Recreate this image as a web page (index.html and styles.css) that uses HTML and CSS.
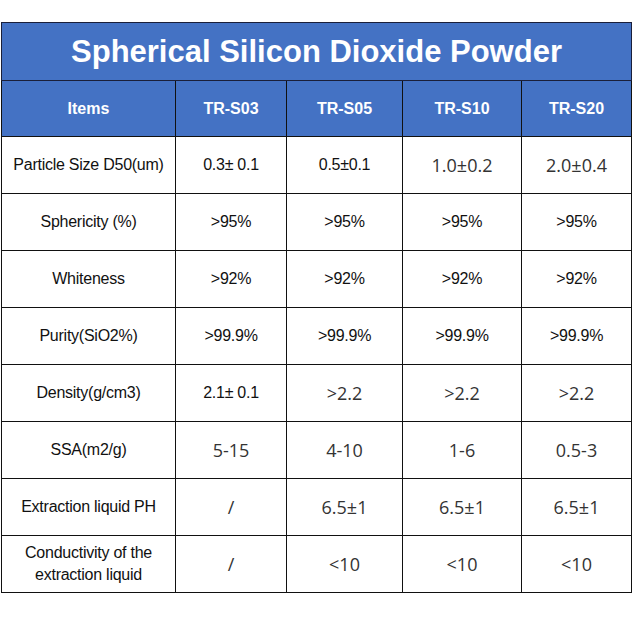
FILE: index.html
```html
<!DOCTYPE html>
<html>
<head>
<meta charset="utf-8">
<link rel="stylesheet" href="styles.css">
</head>
<body>
<div class="wrap">
<table class="spec">
  <colgroup>
    <col class="c0"><col class="c1"><col class="c2"><col class="c3"><col class="c4">
  </colgroup>
  <thead>
    <tr class="title-row"><th colspan="5" class="title">Spherical Silicon Dioxide Powder</th></tr>
    <tr class="head-row">
      <th>Items</th><th>TR-S03</th><th>TR-S05</th><th>TR-S10</th><th>TR-S20</th>
    </tr>
  </thead>
  <tbody>
    <tr><td>Particle Size D50(um)</td><td>0.3± 0.1</td><td>0.5±0.1</td><td class="alt">1.0±0.2</td><td class="alt">2.0±0.4</td></tr>
    <tr><td>Sphericity (%)</td><td>&gt;95%</td><td>&gt;95%</td><td>&gt;95%</td><td>&gt;95%</td></tr>
    <tr><td>Whiteness</td><td>&gt;92%</td><td>&gt;92%</td><td>&gt;92%</td><td>&gt;92%</td></tr>
    <tr><td>Purity(SiO2%)</td><td>&gt;99.9%</td><td>&gt;99.9%</td><td>&gt;99.9%</td><td>&gt;99.9%</td></tr>
    <tr><td>Density(g/cm3)</td><td>2.1± 0.1</td><td class="alt">&gt;2.2</td><td class="alt">&gt;2.2</td><td class="alt">&gt;2.2</td></tr>
    <tr><td>SSA(m2/g)</td><td class="alt">5-15</td><td class="alt">4-10</td><td class="alt">1-6</td><td class="alt">0.5-3</td></tr>
    <tr><td>Extraction liquid PH</td><td class="alt">/</td><td class="alt">6.5±1</td><td class="alt">6.5±1</td><td class="alt">6.5±1</td></tr>
    <tr><td class="two">Conductivity of the<br>extraction liquid</td><td class="alt">/</td><td class="alt">&lt;10</td><td class="alt">&lt;10</td><td class="alt">&lt;10</td></tr>
  </tbody>
</table>
</div>
</body>
</html>
```

FILE: styles.css
```css
html, body {
  margin: 0;
  padding: 0;
  background: #ffffff;
}
.wrap {
  padding: 22px 0 0 1px;
}
.spec {
  border-collapse: collapse;
  width: 630px;
  table-layout: fixed;
  font-family: "Liberation Sans", Arial, sans-serif;
  color: #111;
}
.c0 { width: 174px; }
.c1 { width: 111px; }
.c2 { width: 116px; }
.c3 { width: 119px; }
.c4 { width: 110px; }
.spec th, .spec td {
  border: 1px solid #111;
  text-align: center;
  vertical-align: middle;
  padding: 0;
  height: 56px;
}
.title-row th {
  height: 57px;
  background: #4472c4;
  color: #ffffff;
  font-size: 31px;
  font-weight: bold;
  border-color: #1a1f3a;
}
.head-row th {
  height: 55px;
  background: #4472c4;
  color: #ffffff;
  font-size: 16px;
  font-weight: bold;
  border-color: #111;
}
.spec td {
  font-size: 16px;
  letter-spacing: -0.25px;
}
.spec td.alt {
  font-family: "Open Sans", "Noto Sans CJK SC", sans-serif;
  font-size: 18px;
  color: #333;
  letter-spacing: 0;
}
.spec td.two {
  line-height: 22px;
}
```
